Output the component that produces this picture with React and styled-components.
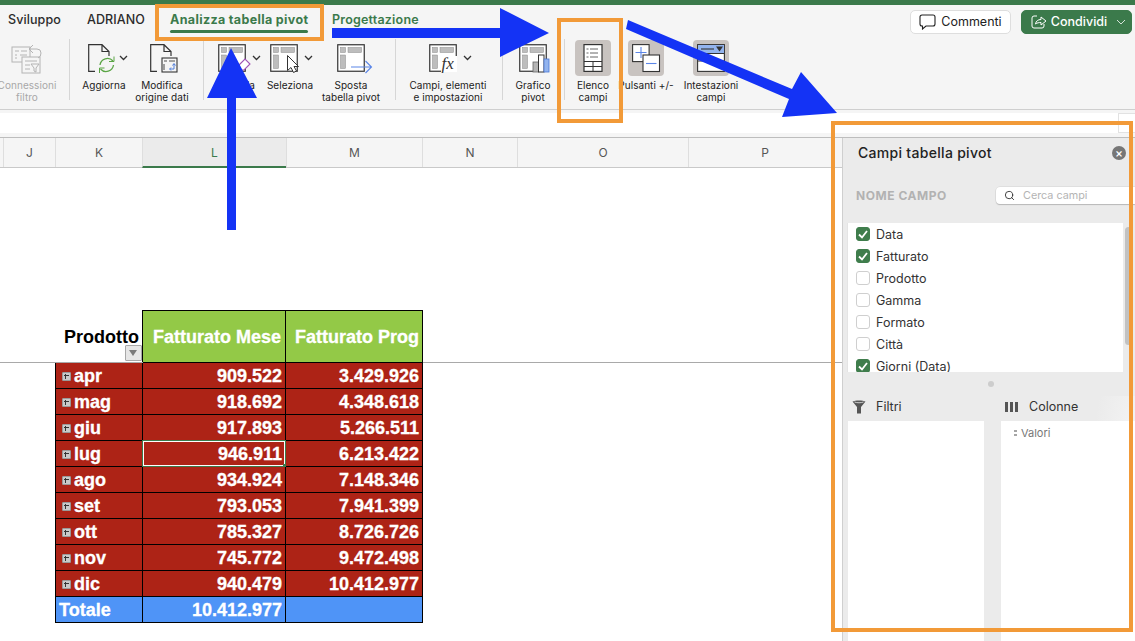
import React from 'react';
import styled, { createGlobalStyle } from 'styled-components';
import { Search } from 'lucide-react';

const GlobalStyle = createGlobalStyle`
  html, body {
    margin: 0;
    padding: 0;
    background: #fff;
  }
`;

const Page = styled.div`
  position: relative;
  width: 1135px;
  height: 641px;
  overflow: hidden;
  background: #fff;
  font-family: Inter, "Liberation Sans", sans-serif;
  color: #222;
`;

const TopBar = styled.div`
  height: 5px;
  background: #3b7a4b;
`;

const TabRow = styled.div`
  display: flex;
  align-items: center;
  height: 33px;
  padding: 0 3px 0 8px;
  background: #f5f5f5;
`;

const Tab = styled.div`
  position: relative;
  align-self: flex-start;
  margin-top: 2px;
  width: ${p => p.$w}px;
  font-size: 12.5px;
  line-height: 26px;
  white-space: nowrap;
  font-weight: ${p => (p.$active ? 700 : p.$green ? 600 : 500)};
  letter-spacing: ${p => (p.$active ? '0.35px' : p.$green ? '0.2px' : '0.1px')};
  color: ${p => (p.$green ? '#3b7a4b' : '#2b2b2b')};

  &::after {
    content: '';
    display: ${p => (p.$active ? 'block' : 'none')};
    position: absolute;
    left: 0;
    width: 138px;
    bottom: 0;
    height: 3px;
    border-radius: 2px;
    background: #3b7a4b;
  }
`;

const TabActions = styled.div`
  display: flex;
  gap: 10px;
  margin-left: auto;
`;

const CommentButton = styled.div`
  display: flex;
  align-items: center;
  justify-content: center;
  gap: 5px;
  box-sizing: border-box;
  width: 101px;
  height: 24px;
  background: #fff;
  border: 1px solid #dedede;
  border-radius: 5px;
  font-size: 12.5px;
`;

const ShareButton = styled(CommentButton)`
  width: 111px;
  padding-left: 4px;
  background: #3b7a4b;
  border-color: #3b7a4b;
  color: #fff;
  font-weight: 500;
  gap: 4px;
`;

const ShareCaret = styled.svg`
  margin-left: 5px;
`;

const Ribbon = styled.div`
  display: flex;
  box-sizing: border-box;
  height: 72px;
  background: #f5f5f5;
  border-bottom: 1px solid #cfcfcf;
`;

const RibbonButton = styled.div`
  display: flex;
  flex-direction: column;
  align-items: center;
  width: ${p => p.$w}px;
  flex: none;
  padding-top: 6px;
  font-size: 10px;
  line-height: 12px;
  letter-spacing: 0.05px;
  color: ${p => (p.$disabled ? '#a8a8a8' : '#222')};
  white-space: nowrap;
`;

const IconSlot = styled.div`
  position: relative;
  width: 28px;
  height: 28px;
  margin-bottom: 7px;
  margin-right: ${p => Math.max(p.$shift, 0) * 2}px;
  margin-left: ${p => Math.max(-p.$shift, 0) * 2}px;
  flex: none;
`;

const ToggleBack = styled.div`
  display: flex;
  align-items: center;
  justify-content: center;
  width: 36px;
  height: 36px;
  margin: -4px;
  border-radius: 4px;
  background: #c8c3c0;
`;

const CaretMark = styled.svg`
  position: absolute;
  right: ${p => p.$right}px;
  top: 11px;
`;

const GlyphSvg = styled.svg`
  display: block;
  overflow: visible;
`;

const RibbonDivider = styled.div`
  flex: none;
  width: 1px;
  height: 61px;
  margin: 1px 0 0 ${p => p.$gap}px;
  background: #d6d6d6;
`;

const FormulaBar = styled.div`
  display: flex;
  justify-content: flex-end;
  box-sizing: border-box;
  height: 28px;
  padding: 3px 0 4px;
  background: #f5f5f5;
  border-bottom: 1px solid #bdbdbd;
`;

const FormulaField = styled.div`
  flex: 1;
  background: #fff;
  display: flex;
  justify-content: flex-end;
`;

const FormulaToggle = styled.div`
  box-sizing: border-box;
  width: 17px;
  height: 100%;
  border: 1px solid #e2e2e2;
  border-right: 0;
`;

const Workspace = styled.div`
  display: flex;
  height: 503px;
`;

const Sheet = styled.div`
  flex: none;
  width: 842px;
`;

const ColumnHeaders = styled.div`
  display: flex;
  box-sizing: border-box;
  height: 30px;
  padding-left: 3px;
  background: #f5f5f5;
  border-bottom: 1px solid #c9c9c9;
`;

const ColumnHeader = styled.div`
  flex: none;
  box-sizing: border-box;
  width: ${p => p.$w}px;
  height: ${p => (p.$active ? '30px' : '29px')};
  text-align: center;
  line-height: 29px;
  font-size: 12px;
  border-left: 1px solid #dedede;
  color: ${p => (p.$active ? '#3b7a4b' : '#555')};
  background: ${p => (p.$active ? '#ebebeb' : 'transparent')};
  border-bottom: ${p => (p.$active ? '2px solid #3b7a4b' : '0')};
`;

const FrozenBand = styled.div`
  display: flex;
  align-items: flex-end;
  box-sizing: border-box;
  height: 195px;
  padding-left: 55px;
  border-bottom: 1px solid #a9a9a9;
  font-family: "Liberation Sans", Arial, sans-serif;
  font-weight: 700;
  font-size: 18px;
`;

const PivotGrid = styled.div`
  display: grid;
  grid-template-columns: 88px 143px 137px;
  width: 368px;
  margin-left: 55px;
  font-family: "Liberation Sans", Arial, sans-serif;
  font-weight: 700;
  font-size: 18px;
  color: #fff;
  -webkit-text-stroke: 0.3px #fff;
`;

const FieldHeader = styled.div`
  position: relative;
  box-sizing: border-box;
  width: 88px;
  height: 52px;
  padding: 17px 3px 0 0;
  text-align: right;
  color: #000;
  line-height: 21px;
  border-right: 1px solid #000;
`;

const FilterButton = styled.div`
  position: absolute;
  right: 0;
  bottom: 1px;
  box-sizing: border-box;
  width: 17px;
  height: 16px;
  background: #e6e6e6;
  border: 1px solid #a8a8a8;
  border-radius: 1px;

  &::after {
    content: '';
    position: absolute;
    left: 3px;
    top: 4px;
    border: 4px solid transparent;
    border-top: 6px solid #7a7a7a;
    border-bottom: 0;
  }
`;

const MeasureHeader = styled.div`
  box-sizing: border-box;
  width: ${p => p.$w}px;
  height: 53px;
  margin-bottom: -1px;
  padding-left: ${p => p.$pad}px;
  background: #93c947;
  border: 1px solid #000;
  border-left: 0;
  color: #fff;
  line-height: 52px;
  -webkit-text-stroke: 0.3px #fff;
  white-space: nowrap;
`;

const Cell = styled.div`
  position: relative;
  display: flex;
  align-items: center;
  justify-content: ${p => (p.$label ? 'flex-start' : 'flex-end')};
  box-sizing: border-box;
  height: 26px;
  padding: 2px ${p => (p.$label ? '0' : '3px')} 0 ${p => (p.$label ? (p.$total ? '3px' : '6px') : '0')};
  background: ${p => (p.$total ? '#4f94f7' : '#ad2316')};
  border-right: 1px solid #000;
  border-bottom: 1px solid #000;
  border-left: ${p => (p.$label ? '1px solid #000' : '0')};
  white-space: nowrap;
`;

const Expander = styled.span`
  position: relative;
  flex: none;
  box-sizing: border-box;
  width: 9px;
  height: 9px;
  margin-right: 3px;
  background: #c9c9c9;
  border: 1px solid #9a9a9a;
  border-radius: 1px;

  &::before {
    content: '';
    position: absolute;
    left: 1px;
    right: 1px;
    top: 2px;
    height: 1px;
    background: #333;
  }

  &::after {
    content: '';
    position: absolute;
    top: 1px;
    bottom: 1px;
    left: 2px;
    width: 1px;
    background: #333;
  }
`;

const SelectedFrame = styled.div`
  position: absolute;
  left: -1px;
  top: -1px;
  right: -1px;
  bottom: -1px;
  border: 1px solid #3b7a4b;
  box-shadow: inset 0 0 0 1px #fff;

  &::after {
    content: '';
    position: absolute;
    right: -3px;
    bottom: -3px;
    width: 5px;
    height: 5px;
    background: #3b7a4b;
  }
`;

const Panel = styled.aside`
  flex: 1;
  display: flex;
  flex-direction: column;
  min-width: 0;
  background: #ebebeb;
  border-left: 1px solid #cfcfcf;
`;

const PanelHead = styled.div`
  display: flex;
  align-items: center;
  justify-content: space-between;
  height: 29px;
  margin-bottom: 1px;
  padding: 0 9px 0 15px;
  font-size: 14px;
  font-weight: 500;
  letter-spacing: 0.3px;
`;

const CloseDot = styled.div`
  position: relative;
  width: 14px;
  height: 14px;
  border-radius: 50%;
  background: #767676;
  color: #fff;
  font-size: 12px;
  line-height: 14px;
  letter-spacing: 0;
  text-align: center;
`;

const SearchRow = styled.div`
  display: flex;
  align-items: center;
  justify-content: space-between;
  height: 17px;
  margin: 19px 0 19px 13px;
`;

const FieldTitle = styled.div`
  font-size: 12px;
  font-weight: 700;
  letter-spacing: 0.55px;
  color: #b2b2b2;
`;

const SearchBox = styled.div`
  display: flex;
  align-items: center;
  gap: 8px;
  box-sizing: border-box;
  width: 139px;
  height: 17px;
  padding-left: 8px;
  background: #fff;
  border-radius: 4px 0 0 4px;
  box-shadow: 0 1px 1px #b8b8b8, 0 0 0 0.5px #d4d4d4;
  font-size: 10.8px;
  line-height: 18px;
  color: #b4b4b4;
`;

const ListArea = styled.div`
  display: flex;
  height: 149px;
  padding-left: 4px;
`;

const FieldList = styled.div`
  flex: none;
  width: 276px;
  height: 149px;
  overflow: hidden;
  background: #fff;
  border-left: 1px solid #e4e4e4;
  box-sizing: border-box;
`;

const FieldRow = styled.div`
  display: flex;
  align-items: center;
  gap: 6px;
  height: 22px;
  padding-left: 8px;
  font-size: 12.5px;
  color: #333;
`;

const Check = styled.span`
  display: flex;
  align-items: center;
  justify-content: center;
  flex: none;
  box-sizing: border-box;
  width: 14px;
  height: 14px;
  border-radius: 3px;
  background: ${p => (p.$on ? '#3f7d4c' : '#fff')};
  border: 1px solid ${p => (p.$on ? '#3f7d4c' : '#cfcfcf')};
`;

const ScrollTrack = styled.div`
  flex: 1;
  padding: 4px 3px 0 2px;
`;

const ScrollThumb = styled.div`
  width: 7px;
  height: 118px;
  border-radius: 4px;
  background: #c2c2c2;
`;

const Grip = styled.div`
  display: flex;
  align-items: center;
  justify-content: center;
  height: 24px;
  padding-left: 3px;

  &::after {
    content: '';
    width: 6px;
    height: 6px;
    border-radius: 50%;
    background: #cdcdcd;
  }
`;

const Areas = styled.div`
  flex: 1;
  display: grid;
  grid-template-columns: 136px 134px;
  justify-content: space-between;
  padding-left: 5px;
  background: radial-gradient(ellipse 40px 90px at 100% 40px, #f4f4f4, rgba(244, 244, 244, 0));
`;

const AreaColumn = styled.div`
  display: flex;
  flex-direction: column;
`;

const AreaTitle = styled.div`
  display: flex;
  align-items: center;
  gap: ${p => p.$gap}px;
  box-sizing: border-box;
  height: 25px;
  padding: 0 0 4px 4px;
  font-size: 12.5px;
  color: #333;
`;

const AreaBox = styled.div`
  flex: 1;
  display: flex;
  align-items: flex-start;
  gap: 4px;
  padding: 5px 0 0 13px;
  background: #fff;
  font-size: 11px;
  color: #777;
`;

const GripDots = styled.span`
  width: 3px;
  height: 8px;
  margin-top: 3px;
  background: radial-gradient(circle at center, #a5a5a5 1.3px, transparent 1.5px) 0 0 / 3px 4px;
`;

const Annotations = styled.svg`
  position: absolute;
  left: 0;
  top: 0;
  pointer-events: none;
`;

const Frame = ({ c = '#333', cell = '#bdbdbd' }) => (
  <>
    <rect x="0.75" y="0.75" width="26.5" height="26.5" fill="#fff" stroke={c} strokeWidth="1.2" />
    <rect x="3.5" y="3.5" width="5" height="5" fill={cell} stroke="#8a8a8a" strokeWidth="0.5" />
    <rect x="11" y="3.5" width="13.5" height="5" fill={cell} stroke="#8a8a8a" strokeWidth="0.5" />
    <rect x="3.5" y="11" width="5" height="13.5" fill={cell} stroke="#8a8a8a" strokeWidth="0.5" />
  </>
);

const Glyph = ({ children }) => (
  <GlyphSvg width="28" height="28" viewBox="0 0 28 28">
    {children}
  </GlyphSvg>
);

const Doc = () => (
  <path d="M7 27.3H0.7V0.7H14L21 7.5V12M14 0.7V7.5H21" fill="none" stroke="#333" strokeWidth="1.2" />
);

const icons = {
  connect: (
    <Glyph>
      <g fill="none" stroke="#b4b4b4" strokeWidth="1">
        <rect x="-1" y="3" width="18" height="15" fill="#f5f5f5" />
        <path d="M2 7h4M8 7h6M2 11h2M2 14h2M7 11h7" />
        <rect x="9" y="13" width="18" height="16" fill="#f5f5f5" />
        <path d="M12 17h12M12 21h5M12 25h5M18 20h8l-3 4v4l-2-1v-3z" />
        <path d="M17 5h7q4 0 4 4t-3 5M20 1l-4 4 4 4" />
      </g>
    </Glyph>
  ),
  refresh: (
    <Glyph>
      <Doc />
      <g fill="none" stroke="#5aa545" strokeWidth="1.3">
        <path d="M12 21a7.5 7.5 0 0 1 13-4M25.5 21a7.5 7.5 0 0 1-13 4" />
        <path d="M26 12.5v5h-5M11.5 29v-5h5" strokeWidth="1" />
      </g>
    </Glyph>
  ),
  source: (
    <Glyph>
      <Doc />
      <rect x="12" y="14" width="15" height="14" fill="#f5f5f5" stroke="#333" strokeWidth="1.1" />
      <path d="M14 17h3M19 17h6M14 20v6" stroke="#888" strokeWidth="1.6" fill="none" />
      <path d="M20 25h4v-5M22.5 21.5l1.5-2 1.5 2M21 23.5l-1.5 1.5 1.5 1.5" stroke="#3f72d8" strokeWidth="0.9" fill="none" />
    </Glyph>
  ),
  table: (
    <Glyph>
      <Frame />
      <path d="M21 21l6-6 5 5-6 6h-5z" fill="#fff" stroke="#a052b5" strokeWidth="1.1" />
    </Glyph>
  ),
  select: (
    <Glyph>
      <Frame />
      <path d="M17.5 11.5v15l3.5-3 2.5 5 3-1.5-2.5-4.5h4.5z" fill="#fff" stroke="#333" strokeWidth="1" />
    </Glyph>
  ),
  move: (
    <Glyph>
      <Frame />
      <path d="M14 23h20M28.5 17l6 6-6 6" fill="none" stroke="#5b86e8" strokeWidth="1.1" />
    </Glyph>
  ),
  fx: (
    <Glyph>
      <Frame />
      <rect x="12" y="12" width="16" height="16" fill="#fff" />
      <text x="12.5" y="25" fontFamily="Liberation Serif, serif" fontStyle="italic" fontSize="17" fill="#333">fx</text>
    </Glyph>
  ),
  chart: (
    <Glyph>
      <Frame />
      <rect x="14" y="18" width="5.5" height="10" fill="#b5b5b5" stroke="#666" strokeWidth="0.8" />
      <rect x="19.5" y="11" width="5.5" height="17" fill="#fff" stroke="#333" strokeWidth="1" />
      <rect x="25" y="15" width="5" height="13" fill="#93b4ee" stroke="#4a78d8" strokeWidth="0.8" />
    </Glyph>
  ),
  list: (
    <ToggleBack>
      <Glyph>
        <rect x="5" y="0.6" width="18" height="26.8" fill="#fff" stroke="#333" strokeWidth="1.2" />
        <path d="M7.5 5h2M11 5h8M7.5 9h2M11 9h8M7.5 13h2M11 13h8" stroke="#555" strokeWidth="0.9" />
        <path d="M5 17.5h18M5 22.5h18M14 17.5v10" stroke="#333" strokeWidth="1" />
      </Glyph>
    </ToggleBack>
  ),
  buttons: (
    <ToggleBack>
      <Glyph>
        <rect x="0.6" y="0.6" width="16.5" height="17" fill="#fff" stroke="#333" strokeWidth="1.1" />
        <path d="M3.5 8.5h11M9 3v11" stroke="#5b86e8" strokeWidth="1.1" />
        <rect x="11" y="11" width="16.5" height="16.5" fill="#fff" stroke="#333" strokeWidth="1.1" />
        <path d="M14 19.5h10.5" stroke="#5b86e8" strokeWidth="1.1" />
      </Glyph>
    </ToggleBack>
  ),
  heads: (
    <ToggleBack>
      <Glyph>
        <rect x="0.6" y="0.6" width="26.8" height="26.8" fill="#fff" stroke="#333" strokeWidth="1.1" />
        <rect x="1" y="1" width="26" height="8.5" fill="#93b4ee" />
        <path d="M4 5h13" stroke="#333" strokeWidth="1.1" />
        <path d="M19 2.5h7l-3.5 5z" fill="#333" />
        <path d="M1 9.5h26M1 17h26" stroke="#333" strokeWidth="1" />
      </Glyph>
    </ToggleBack>
  ),
};

const ribbon = [
  { w: 54, icon: 'connect', label: ['Connessioni', 'filtro'], disabled: true, gapAfter: 15 },
  { w: 68, icon: 'refresh', label: ['Aggiorna'], caret: -12, shift: 2 },
  { w: 48, icon: 'source', label: ['Modifica', 'origine dati'], gapAfter: 17, shift: -2 },
  { w: 68, icon: 'table', label: ['Tabella'], caret: -15, shift: 6 },
  { w: 36, icon: 'select', label: ['Seleziona'], caret: -15, shift: 6 },
  { w: 86, icon: 'move', label: ['Sposta', 'tabella pivot'], gapAfter: 1 },
  { w: 104, icon: 'fx', label: ['Campi, elementi', 'e impostazioni'], caret: -15, gapAfter: 2, shift: 5 },
  { w: 60, icon: 'chart', label: ['Grafico', 'pivot'], gapAfter: 1 },
  { w: 56, icon: 'list', label: ['Elenco', 'campi'] },
  { w: 50, icon: 'buttons', label: ['Pulsanti +/-'] },
  { w: 80, icon: 'heads', label: ['Intestazioni', 'campi'] },
];

const columns = [
  { name: 'J', w: 52 },
  { name: 'K', w: 87 },
  { name: 'L', w: 144, active: true },
  { name: 'M', w: 136 },
  { name: 'N', w: 95 },
  { name: 'O', w: 171 },
  { name: 'P', w: 153 },
];

const rows = [
  ['apr', '909.522', '3.429.926'],
  ['mag', '918.692', '4.348.618'],
  ['giu', '917.893', '5.266.511'],
  ['lug', '946.911', '6.213.422'],
  ['ago', '934.924', '7.148.346'],
  ['set', '793.053', '7.941.399'],
  ['ott', '785.327', '8.726.726'],
  ['nov', '745.772', '9.472.498'],
  ['dic', '940.479', '10.412.977'],
];

const fields = [
  ['Data', true],
  ['Fatturato', true],
  ['Prodotto', false],
  ['Gamma', false],
  ['Formato', false],
  ['Città', false],
  ['Giorni (Data)', true],
];

export default function App() {
  return (
    <Page>
      <GlobalStyle />
      <TopBar />
      <TabRow>
        <Tab $w={79}>Sviluppo</Tab>
        <Tab $w={83}>ADRIANO</Tab>
        <Tab $w={162} $green $active>Analizza tabella pivot</Tab>
        <Tab $w={100} $green>Progettazione</Tab>
        <TabActions>
          <CommentButton>
            <svg width="17" height="16" viewBox="0 0 17 16">
              <path d="M3 1h11a2 2 0 0 1 2 2v7a2 2 0 0 1-2 2H7l-3.5 3v-3H3a2 2 0 0 1-2-2V3a2 2 0 0 1 2-2z" fill="none" stroke="#222" strokeWidth="1.1" />
            </svg>
            Commenti
          </CommentButton>
          <ShareButton>
            <svg width="16" height="15" viewBox="0 0 16 15">
              <path d="M6 2H3a2 2 0 0 0-2 2v8a2 2 0 0 0 2 2h8a2 2 0 0 0 2-2v-2" fill="none" stroke="#fff" strokeWidth="1" />
              <path d="M4.500 10c.5-3 2.500-4.500 5.500-4.500V3l5 4-5 4V8.500c-2 0-4 .3-5.500 1.500z" fill="none" stroke="#fff" strokeWidth="1" />
            </svg>
            Condividi
            <ShareCaret width="10" height="6" viewBox="0 0 10 6">
              <path d="M1 1l4 4 4-4" fill="none" stroke="#d5e4d9" strokeWidth="1" />
            </ShareCaret>
          </ShareButton>
        </TabActions>
      </TabRow>

      <Ribbon>
        {ribbon.map(item => (
          <React.Fragment key={item.icon}>
            <RibbonButton $w={item.w} $disabled={item.disabled}>
              <IconSlot $shift={item.shift || 0}>
                {icons[item.icon]}
                {item.caret && (
                  <CaretMark $right={item.caret} width="9" height="6" viewBox="0 0 9 6">
                    <path d="M1 1l3.500 3.500L8 1" fill="none" stroke="#333" strokeWidth="1.300" />
                  </CaretMark>
                )}
              </IconSlot>
              {item.label.map(line => <span key={line}>{line}</span>)}
            </RibbonButton>
            {item.gapAfter !== undefined && <RibbonDivider $gap={item.gapAfter} />}
          </React.Fragment>
        ))}
      </Ribbon>

      <FormulaBar>
        <FormulaField>
          <FormulaToggle />
        </FormulaField>
      </FormulaBar>

      <Workspace>
        <Sheet>
          <ColumnHeaders>
            {columns.map(col => (
              <ColumnHeader key={col.name} $w={col.w} $active={col.active}>{col.name}</ColumnHeader>
            ))}
          </ColumnHeaders>
          <FrozenBand>
            <FieldHeader>
              Prodotto
              <FilterButton />
            </FieldHeader>
            <MeasureHeader $w={143} $pad={10}>Fatturato Mese</MeasureHeader>
            <MeasureHeader $w={137} $pad={9}>Fatturato Prog</MeasureHeader>
          </FrozenBand>
          <PivotGrid>
            {rows.map(([label, month, total]) => (
              <React.Fragment key={label}>
                <Cell $label><Expander />{label}</Cell>
                <Cell>
                  {label === 'lug' && <SelectedFrame />}
                  {month}
                </Cell>
                <Cell>{total}</Cell>
              </React.Fragment>
            ))}
            <Cell $label $total>Totale</Cell>
            <Cell $total>10.412.977</Cell>
            <Cell $total />
          </PivotGrid>
        </Sheet>

        <Panel>
          <PanelHead>
            Campi tabella pivot
            <CloseDot>×</CloseDot>
          </PanelHead>
          <SearchRow>
            <FieldTitle>NOME CAMPO</FieldTitle>
            <SearchBox>
              <Search size={11} color="#333" strokeWidth={2} />
              Cerca campi
            </SearchBox>
          </SearchRow>
          <ListArea>
            <FieldList>
              {fields.map(([name, on]) => (
                <FieldRow key={name}>
                  <Check $on={on}>
                    {on && (
                      <svg width="10" height="9" viewBox="0 0 10 9">
                        <path d="M1 4.500l3 3L9 1" fill="none" stroke="#fff" strokeWidth="1.800" />
                      </svg>
                    )}
                  </Check>
                  {name}
                </FieldRow>
              ))}
            </FieldList>
            <ScrollTrack>
              <ScrollThumb />
            </ScrollTrack>
          </ListArea>
          <Grip />
          <Areas>
            <AreaColumn>
              <AreaTitle $gap={10}>
                <svg width="14" height="14" viewBox="0 0 14 14">
                  <path d="M0.500 1.500C3 0 11 0 13.500 1.500L9 7v6.500H5V7z" fill="#555" />
                  <path d="M2.500 2C5 3 9 3 11.500 2" fill="none" stroke="#eee" strokeWidth="0.800" />
                </svg>
                Filtri
              </AreaTitle>
              <AreaBox />
            </AreaColumn>
            <AreaColumn>
              <AreaTitle $gap={11}>
                <svg width="13" height="10" viewBox="0 0 13 10">
                  <path d="M0 0h3v10H0zM5 0h3v10H5zM10 0h3v10h-3z" fill="#555" />
                </svg>
                Colonne
              </AreaTitle>
              <AreaBox>
                <GripDots />
                Valori
              </AreaBox>
            </AreaColumn>
          </Areas>
        </Panel>
      </Workspace>

      <Annotations width="1135" height="641" viewBox="0 0 1135 641">
        <g fill="none" stroke="#f29a38" strokeWidth="4">
          <rect x="157" y="6" width="165" height="33" />
          <rect x="559" y="20" width="62" height="101" />
          <rect x="833" y="123" width="298" height="507" />
        </g>
        <g fill="#1433f5">
          <path d="M332 28H500V8L549 33L500 57V38H332z" />
          <path d="M207 98L231 48L257 98H236V230H227V98z" />
          <path d="M628 20L792 89L801 72L837 113L782 117L789 99L626 29z" />
        </g>
      </Annotations>
    </Page>
  );
}
